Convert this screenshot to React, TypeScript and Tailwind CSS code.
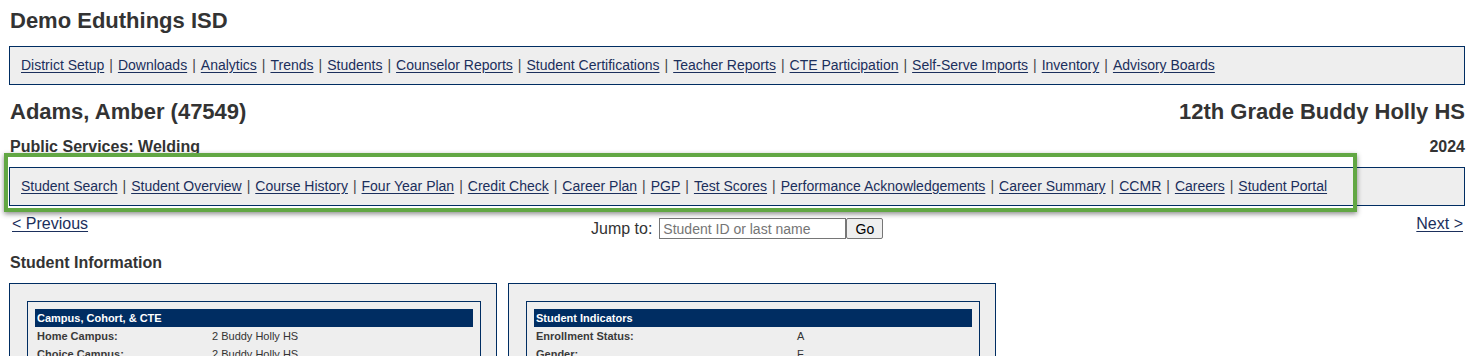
import React from 'react';

const topLinks = [
  'District Setup',
  'Downloads',
  'Analytics',
  'Trends',
  'Students',
  'Counselor Reports',
  'Student Certifications',
  'Teacher Reports',
  'CTE Participation',
  'Self-Serve Imports',
  'Inventory',
  'Advisory Boards',
];

const studentLinks = [
  'Student Search',
  'Student Overview',
  'Course History',
  'Four Year Plan',
  'Credit Check',
  'Career Plan',
  'PGP',
  'Test Scores',
  'Performance Acknowledgements',
  'Career Summary',
  'CCMR',
  'Careers',
  'Student Portal',
];

const NavBar = ({ links }: { links: string[] }) => (
  <div className="h-[39px] border border-[#002d62] bg-[#eeeeee] px-[11px] flex items-center text-[14px] text-[#444]">
    {links.map((l, i) => (
      <React.Fragment key={l}>
        {i > 0 && <span className="px-[5px]">|</span>}
        <a href="#" className="text-[#1b2f5c] underline underline-offset-2">
          {l}
        </a>
      </React.Fragment>
    ))}
  </div>
);

const InfoPanel = ({ title, rows, labelWidth }: { title: string; rows: [string, string][]; labelWidth: string }) => (
  <div className="w-[488px] h-[90px] border border-[#002d62] bg-[#eeeeee] pt-[17px] px-[17px] overflow-hidden">
    <div className="border border-[#002d62] pt-[7px] px-[7px] h-[100px] w-[454px]">
      <div className="h-[18px] bg-[#002d62] text-white font-bold text-[11px] leading-[18px] pl-[2px]">{title}</div>
      {rows.map(([k, v]) => (
        <div key={k} className="flex h-[18px] items-center text-[11px] text-[#333]">
          <div className={`${labelWidth} pl-[2px] font-bold text-[#3a3a3a]`}>{k}</div>
          <div>{v}</div>
        </div>
      ))}
    </div>
  </div>
);

export default function App() {
  return (
    <div className="relative w-[1476px] h-[356px] overflow-hidden bg-white font-['Liberation_Sans',Arial,sans-serif] text-[#333]">
      <div className="pl-[9px] pr-[11px]">
        <h1 className="pt-[8px] h-[46px] text-[22px] font-bold leading-[26px] pl-[1px]">Demo Eduthings ISD</h1>
        <NavBar links={topLinks} />
        <div className="flex justify-between items-center h-[52px] text-[22px] font-bold">
          <span className="pl-[1px]">Adams, Amber (47549)</span>
          <span>12th Grade Buddy Holly HS</span>
        </div>
        <div className="flex justify-between items-start h-[30px] pt-[1px] text-[16px] leading-[18px] font-bold">
          <span className="pl-[1px]">Public Services: Welding</span>
          <span>2024</span>
        </div>
        <NavBar links={studentLinks} />
        <div className="relative h-[33px] text-[16px] leading-[18px]">
          <a href="#" className="absolute left-[3px] top-[9px] text-[#1b2f5c] underline underline-offset-2">&lt; Previous</a>
          <div className="absolute left-[582px] top-[12px] flex items-center">
            <span className="mr-[7px]">Jump to:</span>
            <input
              placeholder="Student ID or last name"
              className="w-[187px] h-[21px] border border-[#767676] bg-white px-[3px] text-[14px] placeholder-[#757575]"
            />
            <button className="h-[21px] w-[37px] border border-[#767676] bg-[#efefef] rounded-[2px] text-[14px] text-black">Go</button>
          </div>
          <a href="#" className="absolute right-[2px] top-[9px] text-[#1b2f5c] underline underline-offset-2">Next &gt;</a>
        </div>
        <h2 className="h-[44px] pt-[15px] text-[16px] font-bold leading-[18px] pl-[1px]">Student Information</h2>
        <div className="flex gap-[11px]">
          <InfoPanel
            title="Campus, Cohort, & CTE"
            labelWidth="w-[177px]"
            rows={[
              ['Home Campus:', '2 Buddy Holly HS'],
              ['Choice Campus:', '2 Buddy Holly HS'],
            ]}
          />
          <InfoPanel
            title="Student Indicators"
            labelWidth="w-[263px]"
            rows={[
              ['Enrollment Status:', 'A'],
              ['Gender:', 'F'],
            ]}
          />
        </div>
      </div>
      <div className="absolute left-[4px] top-[153px] w-[1353px] h-[59px] border-[4px] border-[#62a744] shadow-[0_2px_5px_rgba(0,0,0,0.45)] pointer-events-none" />
    </div>
  );
}
